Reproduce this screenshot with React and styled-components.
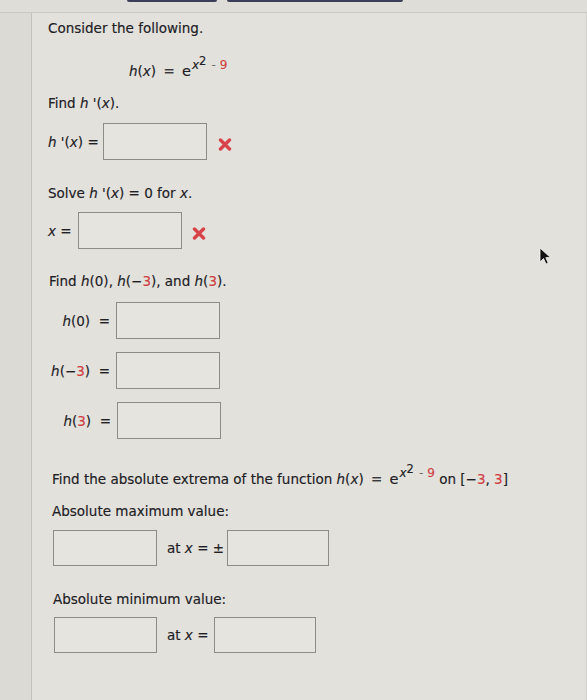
import React from "react";
import styled, { createGlobalStyle } from "styled-components";

const GlobalStyle = createGlobalStyle`
  html, body { margin: 0; padding: 0; }
  body {
    background: #dddbd6;
    font-family: "DejaVu Sans", Verdana, sans-serif;
    color: #202024;
    width: 587px;
    height: 700px;
    overflow: hidden;
    -webkit-text-stroke: 0.15px #202024;
  }
`;

const Screen = styled.div`
  position: relative;
  width: 587px;
  height: 700px;
  display: flex;
  flex-direction: column;
  background: #e2e0db;
`;

const TopStrip = styled.div`
  height: 12px;
  flex: none;
  display: flex;
  gap: 10px;
  padding-left: 127px;
  background: #dfddd8;
  border-bottom: 1px solid #cac8c3;
`;

const Tab = styled.div`
  width: ${(p) => p.$w}px;
  height: 2px;
  background: #3b3e56;
  border-radius: 0 0 3px 3px;
`;

const Body = styled.div`
  flex: 1;
  display: flex;
`;

const Gutter = styled.div`
  width: 31px;
  flex: none;
  background: #dcdad5;
  border-right: 1px solid #c3c1bc;
`;

const Panel = styled.div`
  flex: 1;
  background: #e3e1dc;
  padding-left: 16px;
  display: flex;
  flex-direction: column;
  border-right: 1px solid #d3d1cc;
`;

const Line = styled.div`
  font-size: 13.5px;
  line-height: 16px;
  height: 16px;
  white-space: nowrap;
  margin-top: ${(p) => p.$mt || 0}px;
  padding-left: ${(p) => p.$pl || 0}px;
`;

const I = styled.span`
  font-style: italic;
`;

const Red = styled.span`
  color: #cf3e43;
  -webkit-text-stroke: 0.15px #cf3e43;
`;

const Eq = styled.span`
  margin: 0 3px;
  color: #3a3a3e;
`;

const Base = styled.span`
  font-size: 14.5px;
`;

const Sup = styled.span`
  position: relative;
  top: -0.6em;
  font-size: 12px;
  margin-left: 1px;
`;

const SupSup = styled.span`
  position: relative;
  top: -0.3em;
  font-size: 11.5px;
`;

const Minus = styled.span`
  color: #6b6b6b;
  -webkit-text-stroke: 0;
  margin: 0 4px 0 5px;
`;

const Row = styled.div`
  display: flex;
  align-items: center;
  margin-top: ${(p) => p.$mt || 0}px;
  padding-left: ${(p) => p.$pl || 0}px;
`;

const Label = styled.div`
  font-size: 13.5px;
  line-height: 16px;
  width: ${(p) => p.$w}px;
  text-align: ${(p) => p.$align || "left"};
  padding-right: ${(p) => p.$pr || 0}px;
  box-sizing: border-box;
  white-space: nowrap;
  flex: none;
`;

const Inline = styled.div`
  font-size: 13.5px;
  line-height: 16px;
  white-space: nowrap;
  margin: 0 ${(p) => p.$mr || 0}px 0 ${(p) => p.$ml || 0}px;
`;

const Box = styled.div`
  width: ${(p) => p.$w}px;
  height: ${(p) => p.$h}px;
  box-sizing: border-box;
  border: 1.5px solid #8d8b86;
  background: #e6e4df;
  flex: none;
`;

const Cross = styled.svg`
  width: 14px;
  height: 13px;
  margin-left: ${(p) => p.$ml}px;
  margin-top: 6px;
  flex: none;
`;

const Cursor = styled.svg`
  position: absolute;
  left: 539px;
  top: 247px;
  width: 14px;
  height: 19px;
`;

const X = ({ ml }) => (
  <Cross $ml={ml} viewBox="0 0 14 13">
    <path d="M2.5 2 L11.5 11 M11.5 2 L2.5 11" stroke="#d8434a" strokeWidth="3.4" strokeLinecap="round" />
  </Cross>
);

const Expo = () => (
  <>
    <Base>e</Base>
    <Sup>
      <I>x</I>
      <SupSup>2</SupSup>
      <Minus>-</Minus>
      <Red>9</Red>
    </Sup>
  </>
);

export default function App() {
  return (
    <>
      <GlobalStyle />
      <Screen>
        <TopStrip>
          <Tab $w={90} />
          <Tab $w={176} />
        </TopStrip>
        <Body>
          <Gutter />
          <Panel>
            <Line $mt={7}>Consider the following.</Line>
            <Line $mt={27} $pl={81}>
              <I>h</I>(<I>x</I>)<Eq> = </Eq>
              <Expo />
            </Line>
            <Line $mt={16}>
              Find <I>h</I> '(<I>x</I>).
            </Line>
            <Row $mt={12}>
              <Label $w={55}>
                <I>h</I> '(<I>x</I>) =
              </Label>
              <Box $w={104} $h={37} />
              <X ml={11} />
            </Row>
            <Line $mt={25}>
              Solve <I>h</I> '(<I>x</I>) = 0 for <I>x</I>.
            </Line>
            <Row $mt={11}>
              <Label $w={30}>
                <I>x</I> =
              </Label>
              <Box $w={104} $h={37} />
              <X ml={10} />
            </Row>
            <Line $mt={24} $pl={1}>
              Find <I>h</I>(0), <I>h</I>(−<Red>3</Red>), and <I>h</I>(<Red>3</Red>).
            </Line>
            <Row $mt={13}>
              <Label $w={68} $align="right" $pr={6}>
                <I>h</I>(0) &nbsp;=
              </Label>
              <Box $w={104} $h={37} />
            </Row>
            <Row $mt={13}>
              <Label $w={68} $align="right" $pr={6}>
                <I>h</I>(−<Red>3</Red>) &nbsp;=
              </Label>
              <Box $w={104} $h={37} />
            </Row>
            <Row $mt={13}>
              <Label $w={69} $align="right" $pr={6}>
                <I>h</I>(<Red>3</Red>) &nbsp;=
              </Label>
              <Box $w={104} $h={37} />
            </Row>
            <Line $mt={32} $pl={4}>
              Find the absolute extrema of the function <I>h</I>(<I>x</I>)<Eq> = </Eq>
              <Expo /> on [−<Red>3</Red>, <Red>3</Red>]
            </Line>
            <Line $mt={16} $pl={4}>Absolute maximum value:</Line>
            <Row $mt={11} $pl={5}>
              <Box $w={104} $h={36} />
              <Inline $ml={10} $mr={3}>
                at <I>x</I> = ±
              </Inline>
              <Box $w={102} $h={36} />
            </Row>
            <Line $mt={25} $pl={5}>Absolute minimum value:</Line>
            <Row $mt={10} $pl={6}>
              <Box $w={103} $h={36} />
              <Inline $ml={10} $mr={6}>
                at <I>x</I> =
              </Inline>
              <Box $w={102} $h={36} />
            </Row>
          </Panel>
        </Body>
        <Cursor viewBox="0 0 14 19">
          <path d="M1 1 L1 15 L4.5 11.5 L7 17 L9.2 16 L6.8 10.6 L11.5 10.6 Z" fill="#111" stroke="#f4f4f4" strokeWidth="0.8" strokeLinejoin="round" />
        </Cursor>
      </Screen>
    </>
  );
}
